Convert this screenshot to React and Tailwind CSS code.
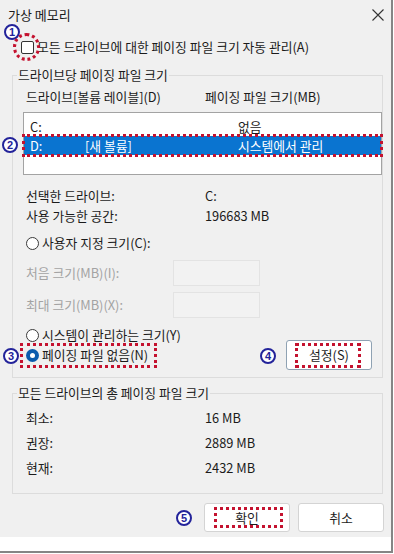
import React from "react";

const ink = "text-[#1b1b1b]";

function Num({ n, className }) {
  return (
    <span
      className={`absolute flex h-[16px] w-[16px] items-center justify-center rounded-full border-2 border-[#23239a] bg-white font-['Liberation_Sans',sans-serif] text-[11px] font-bold leading-none text-[#23239a] ${className}`}
    >
      {n}
    </span>
  );
}

function Dots({ className }) {
  return <span className={`pointer-events-none absolute border-[3px] border-dotted border-[#c4122f] ${className}`} />;
}

function Radio({ checked, label }) {
  return (
    <div className="flex h-[16px] items-center">
      {checked ? (
        <span className="flex h-[13px] w-[13px] shrink-0 items-center justify-center rounded-full bg-[#0b5cad]">
          <span className="h-[5px] w-[5px] rounded-full bg-white" />
        </span>
      ) : (
        <span className="h-[13px] w-[13px] shrink-0 rounded-full border border-[#3a3a3a] bg-white" />
      )}
      <span className="ml-[3px] whitespace-nowrap">{label}</span>
    </div>
  );
}

function Group({ title, className, children }) {
  return (
    <div className={`relative ml-[12px] w-[371px] border border-[#dcdcdc] ${className}`}>
      <span className="absolute -top-[10px] left-[4px] bg-[#f0f0f0] px-[1px] leading-[18px]">{title}</span>
      {children}
    </div>
  );
}

function InfoRow({ label, value, className = "" }) {
  return (
    <div className={`flex h-[16px] items-center pl-[13px] ${className}`}>
      <span className="w-[179px]">{label}</span>
      <span>{value}</span>
    </div>
  );
}

export default function App() {
  return (
    <div className="h-[554px] w-[394px] bg-white">
      <div
        className={`relative flex h-[553px] w-[393px] flex-col border-b-2 border-r-2 border-[#858585] bg-[#f0f0f0] text-[12.8px] ${ink} font-['Noto_Sans_CJK_KR','Noto_Sans',sans-serif]`}
      >
        {/* title bar */}
        <div className="flex h-[30px] items-center justify-between pl-[8px] pr-[6px]">
          <span className="text-[13px] leading-[16px]">가상 메모리</span>
          <svg width="12" height="12" viewBox="0 0 12 12" className="mr-[1px]">
            <path d="M0.5 0.5 L11.5 11.5 M11.5 0.5 L0.5 11.5" stroke="#333" strokeWidth="1.1" fill="none" />
          </svg>
        </div>

        {/* auto manage */}
        <div className="mt-[6px] flex h-[22px] items-center pl-[21px]">
          <span className="h-[13px] w-[13px] rounded-[2px] border border-[#333] bg-white" />
          <span className="ml-[3px]">모든 드라이브에 대한 페이징 파일 크기 자동 관리(A)</span>
        </div>

        <Group title="드라이브당 페이징 파일 크기" className="mt-[17px] h-[303px]">
          <div className="mt-[13px] flex h-[16px] items-center pl-[13px]">
            <span className="w-[179px]">드라이브[볼륨 레이블](D)</span>
            <span>페이징 파일 크기(MB)</span>
          </div>

          <div className="ml-[10px] mt-[7px] h-[63px] w-[359px] border border-[#a3a3a3] bg-white pt-[5px]">
            <div className="flex h-[18px] items-center pl-[6px]">
              <span className="w-[55px]">C:</span>
              <span className="w-[153px]"></span>
              <span>없음</span>
            </div>
            <div className="relative flex h-[19px] items-center bg-[#0a74d0] pl-[6px] text-white">
              <span className="w-[55px]">D:</span>
              <span className="w-[153px]">[새 볼륨]</span>
              <span>시스템에서 관리</span>
              <Dots className="-bottom-[2px] -left-[2px] -right-[2px] -top-[2px]" />
            </div>
          </div>

          <InfoRow label="선택한 드라이브:" value="C:" className="mt-[13px]" />
          <InfoRow label="사용 가능한 공간:" value="196683 MB" className="mt-[4px]" />

          <div className="mt-[11px] pl-[13px]">
            <Radio label="사용자 지정 크기(C):" />
          </div>

          <div className="mt-[9px] flex h-[26px] items-center pl-[13px] text-[#a3a3a3]">
            <span className="w-[147px]">처음 크기(MB)(I):</span>
            <span className="h-[26px] w-[87px] border border-[#e3e3e3] bg-[#f2f2f2]" />
          </div>
          <div className="mt-[6px] flex h-[26px] items-center pl-[13px] text-[#a3a3a3]">
            <span className="w-[147px]">최대 크기(MB)(X):</span>
            <span className="h-[26px] w-[87px] border border-[#e3e3e3] bg-[#f2f2f2]" />
          </div>

          <div className="mt-[9px] flex pl-[13px] pr-[10px]">
            <div className="flex flex-col gap-[4px]">
              <Radio label="시스템이 관리하는 크기(Y)" />
              <Radio checked label="페이징 파일 없음(N)" />
            </div>
            <button className="relative ml-auto mt-[13px] flex h-[30px] w-[86px] items-center justify-center rounded-[3px] border border-[#8fa2b3] bg-white">
              설정(S)
              <Dots className="bottom-[1px] left-[8px] right-[10px] top-[2px]" />
            </button>
          </div>
        </Group>

        <Group title="모든 드라이브의 총 페이징 파일 크기" className="mt-[15px] h-[101px]">
          <InfoRow label="최소:" value="16 MB" className="mt-[16px]" />
          <InfoRow label="권장:" value="2889 MB" className="mt-[9px]" />
          <InfoRow label="현재:" value="2432 MB" className="mt-[9px]" />
        </Group>

        {/* dialog buttons */}
        <div className="mt-[9px] flex justify-end gap-[8px] pr-[7px]">
          <button className="relative flex h-[29px] w-[86px] items-center justify-center rounded-[3px] border border-[#d4d4d4] bg-white">
            확인
            <Dots className="bottom-[3px] left-[9px] right-[6px] top-[3px]" />
          </button>
          <button className="flex h-[29px] w-[86px] items-center justify-center rounded-[3px] border border-[#d4d4d4] bg-white">
            취소
          </button>
        </div>

        <div className="mt-[5px] flex-1 bg-white" />

        {/* annotations */}
        <Num n="1" className="left-[4px] top-[24px]" />
        <span className="pointer-events-none absolute left-[13px] top-[33px] h-[28px] w-[27px] rounded-full border-[3px] border-dotted border-[#c4122f]" />
        <Num n="2" className="left-[2px] top-[137px]" />
        <Num n="3" className="left-[3px] top-[348px]" />
        <Dots className="left-[20px] top-[343px] h-[25px] w-[137px]" />
        <Num n="4" className="left-[260px] top-[348px]" />
        <Num n="5" className="left-[176px] top-[510px]" />
      </div>
    </div>
  );
}
